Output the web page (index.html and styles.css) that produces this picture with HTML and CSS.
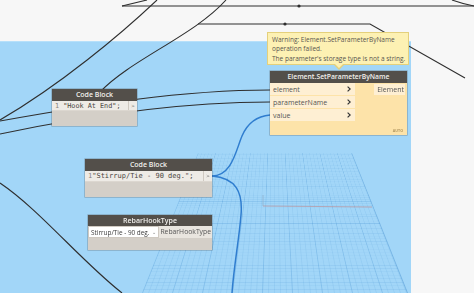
FILE: index.html
```html
<!DOCTYPE html>
<html>
<head>
<meta charset="utf-8">
<link rel="stylesheet" href="styles.css">
</head>
<body>
<div class="screen">
  <div class="canvas">
    <div class="grid"></div>
    <svg class="axes" width="411" height="252" viewBox="0 41 411 252">
      <path d="M263,195 L263,206" stroke="#8fb3cf" stroke-width="0.8" fill="none"/>
      <path d="M263,206 L372,207" stroke="#b99aa6" stroke-width="0.8" fill="none"/>
    </svg>
  </div>

  <svg class="wires" width="474" height="293" viewBox="0 0 474 293">
    <g fill="none" stroke="#2e2e2e" stroke-width="1.1">
      <path d="M122,6 L147,0"/>
      <path d="M122,6 L474,6"/>
      <path d="M452,0 Q463,4 474,6"/>
      <path d="M157,0 C120,35 60,85 0,120"/>
      <path d="M226,0 C195,35 130,60 100,92"/>
      <path d="M198,24 L370,24 L465,78"/>
      <path d="M0,121 C90,105 180,90 270,90"/>
      <path d="M0,134 C90,115 180,102 270,102"/>
      <path d="M0,183 C40,210 80,260 122,293"/>
    </g>
    <circle cx="299" cy="6" r="1.6" fill="#2e2e2e"/>
    <circle cx="285" cy="24" r="1.6" fill="#2e2e2e"/>
    <g fill="none" stroke="#2f7dcf" stroke-width="1.5">
      <path d="M212,176 C232,176 236,150 242,136 C248,122 258,116 270,115"/>
      <path d="M212,176 C236,178 243,192 241,215 C239,240 234,265 232,293"/>
    </g>
  </svg>

  <div class="node cb cb1">
    <div class="node-head">Code Block</div>
    <div class="code-row">
      <div class="code"><span class="ln">1</span> "Hook At End";</div>
      <div class="port-out">&gt;</div>
    </div>
  </div>

  <div class="node cb cb2">
    <div class="node-head">Code Block</div>
    <div class="code-row">
      <div class="code"><span class="ln">1</span>"Stirrup/Tie - 90 deg.";</div>
      <div class="port-out">&gt;</div>
    </div>
  </div>

  <div class="node rht">
    <div class="node-head">RebarHookType</div>
    <div class="rht-row">
      <div class="dropdown"><span>Stirrup/Tie - 90 deg.</span><span class="caret">⌄</span></div>
      <div class="out-label">RebarHookType</div>
    </div>
  </div>

  <div class="node esp">
    <div class="node-head">Element.SetParameterByName</div>
    <div class="esp-body">
      <div class="inputs">
        <div class="in-row"><span>element</span><svg class="chev" width="4" height="6" viewBox="0 0 4 6"><path d="M0.6,0.6 L3.2,3 L0.6,5.4" fill="none" stroke="#333" stroke-width="1.2"/></svg></div>
        <div class="in-row"><span>parameterName</span><svg class="chev" width="4" height="6" viewBox="0 0 4 6"><path d="M0.6,0.6 L3.2,3 L0.6,5.4" fill="none" stroke="#333" stroke-width="1.2"/></svg></div>
        <div class="in-row"><span>value</span><svg class="chev" width="4" height="6" viewBox="0 0 4 6"><path d="M0.6,0.6 L3.2,3 L0.6,5.4" fill="none" stroke="#333" stroke-width="1.2"/></svg></div>
      </div>
      <div class="outputs">
        <div class="out-row">Element</div>
      </div>
    </div>
    <div class="auto">AUTO</div>
  </div>

  <div class="warn">
    <div>Warning: Element.SetParameterByName</div>
    <div>operation failed.</div>
    <div>The parameter's storage type is not a string.</div>
  </div>
</div>
</body>
</html>
```

FILE: styles.css
```css
* { box-sizing: border-box; margin: 0; padding: 0; }

body {
  margin: 0;
  width: 474px;
  height: 293px;
  overflow: hidden;
  font-family: "Open Sans", "Noto Sans", sans-serif;
}

.screen {
  position: relative;
  width: 474px;
  height: 293px;
  background: #f7f7f7;
  padding-top: 41px;
}

.canvas {
  position: relative;
  width: 411px;
  height: 252px;
  background: #a2d6f8;
  overflow: hidden;
  border-top: 1px solid #b7e0fa;
}

.grid {
  position: absolute;
  left: 142px;
  top: -127px;
  width: 266px;
  height: 378px;
  transform-origin: 50% 100%;
  transform: perspective(400px) rotateX(50.3deg);
  border-right: 1px solid rgba(80, 150, 210, 0.3);
  background-image:
    repeating-linear-gradient(to right, rgba(70, 145, 210, 0.2) 0 1px, transparent 1px 30px),
    repeating-linear-gradient(to bottom, rgba(70, 145, 210, 0.2) 0 1px, transparent 1px 30px),
    repeating-linear-gradient(to right, rgba(80, 155, 215, 0.14) 0 1px, transparent 1px 6px),
    repeating-linear-gradient(to bottom, rgba(80, 155, 215, 0.14) 0 1px, transparent 1px 6px);
}

.axes {
  position: absolute;
  left: 0;
  top: -1px;
}

.wires {
  position: absolute;
  left: 0;
  top: 0;
  pointer-events: none;
}

/* Nodes */
.node {
  position: absolute;
  display: flex;
  flex-direction: column;
  background: #d4cfc8;
  box-shadow: 0 0 0 0.6px rgba(60, 55, 50, 0.35);
}

.node-head {
  flex: none;
  height: 12px;
  background: #534f4a;
  color: #f1efec;
  font-size: 7px;
  font-weight: 600;
  line-height: 12px;
  text-align: center;
  white-space: nowrap;
}

.cb1 { left: 52px; top: 89px; width: 85px; height: 37px; }
.cb2 { left: 85px; top: 159px; width: 127px; height: 38px; }

.code-row {
  display: flex;
  height: 10px;
  background: #eeebe6;
  border-bottom: 1px solid #dcd7d0;
}
.cb2 .code-row { height: 11px; }

.code {
  flex: 1;
  font-family: "DejaVu Sans Mono", "Liberation Mono", monospace;
  font-size: 6.8px;
  line-height: 10px;
  padding-left: 3px;
  color: #4a4642;
  white-space: pre;
  overflow: hidden;
}
.cb2 .code { line-height: 11px; font-size: 7px; }
.ln { color: #8a8580; }

.port-out {
  flex: none;
  width: 9px;
  border-left: 1px solid #cfc9c1;
  font-size: 6px;
  color: #555;
  display: flex;
  align-items: center;
  justify-content: center;
}

/* RebarHookType */
.rht { left: 88px; top: 215px; width: 124px; height: 35px; }
.rht .node-head { height: 11px; line-height: 11px; }
.rht-row {
  display: flex;
  height: 12px;
}
.dropdown {
  width: 71px;
  background: #ffffff;
  border: 1px solid #cfc9c1;
  display: flex;
  align-items: center;
  justify-content: space-between;
  padding: 0 2px 0 2px;
  font-size: 6.4px;
  color: #3c3c3c;
  white-space: nowrap;
}
.caret { font-size: 5px; color: #777; line-height: 1; }
.out-label {
  flex: 1;
  background: #e9e5df;
  font-size: 6.8px;
  line-height: 12px;
  color: #555;
  text-align: right;
  padding-right: 1px;
  white-space: nowrap;
}

/* Element.SetParameterByName */
.esp {
  left: 270px;
  top: 71px;
  width: 137px;
  height: 64px;
  background: #fde3a9;
}
.esp .node-head { font-size: 6.8px; }
.esp-body {
  display: flex;
  justify-content: space-between;
}
.inputs {
  width: 85px;
  display: flex;
  flex-direction: column;
  gap: 1px;
}
.in-row {
  height: 12px;
  background: #feefd3;
  display: flex;
  align-items: center;
  justify-content: space-between;
  padding: 0 4px 0 3px;
  font-size: 7px;
  color: #555;
}
.outputs {
  width: 31px;
  margin-top: 1px;
  margin-right: 2px;
}
.out-row {
  height: 11px;
  background: #feefd3;
  font-size: 7px;
  line-height: 11px;
  color: #555;
  text-align: right;
  padding-right: 1px;
}
.auto {
  position: absolute;
  right: 4px;
  bottom: 2px;
  font-size: 3.6px;
  color: #b39860;
  font-weight: 700;
}

/* Warning tooltip */
.warn {
  position: absolute;
  left: 267px;
  top: 32px;
  width: 142px;
  height: 33px;
  background: #fdf1b3;
  border: 1px solid #e4d07c;
  padding: 2px 3px 0 4px;
  font-size: 6.5px;
  line-height: 9.4px;
  color: #585650;
  white-space: nowrap;
}
.warn::before {
  content: "";
  position: absolute;
  left: 66px;
  bottom: -6px;
  border-left: 5px solid transparent;
  border-right: 5px solid transparent;
  border-top: 5px solid #e4d07c;
}
.warn::after {
  content: "";
  position: absolute;
  left: 67px;
  bottom: -4px;
  border-left: 4px solid transparent;
  border-right: 4px solid transparent;
  border-top: 4px solid #fdf1b3;
}
```
